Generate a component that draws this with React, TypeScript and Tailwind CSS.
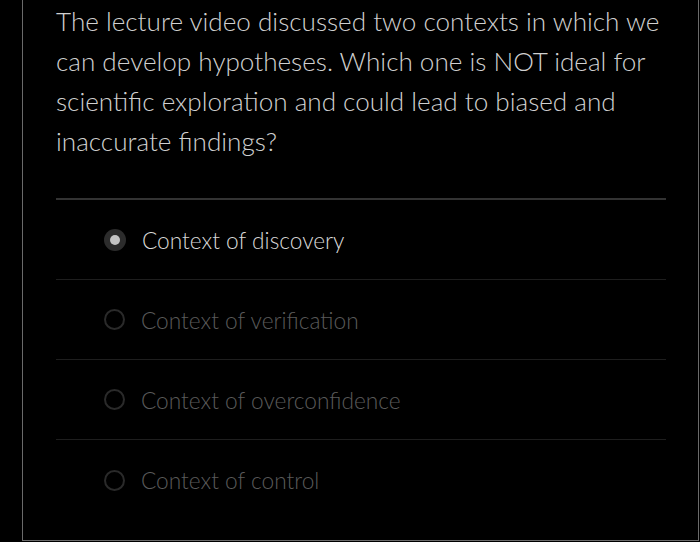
const options = [
  "Context of discovery",
  "Context of verification",
  "Context of overconfidence",
  "Context of control",
];

export default function App() {
  return (
    <div className="w-[700px] h-[542px] bg-black overflow-hidden" style={{ fontFamily: "Lato, 'Open Sans', sans-serif" }}>
      <div className="ml-[22px] mr-[1px] h-[541px] border-l border-r border-b border-[#6a6a6a] pl-[33px] pr-[32px]">
        <p className="pt-[1px] text-[26.1px] leading-[40px] font-light text-[#d0d0d0]">
          The lecture video discussed two contexts in which we can develop hypotheses. Which one is NOT ideal for
          scientific exploration and could lead to biased and inaccurate findings?
        </p>
        <div className="mt-[37px] border-t-2 border-[#333333]">
          {options.map((opt, i) => (
            <div
              key={opt}
              className={`h-[80px] flex items-center pl-[48px] ${i < options.length - 1 ? "border-b border-[#1e1e1e]" : ""}`}
            >
              {i === 0 ? (
                <span className="w-[22px] h-[22px] rounded-full bg-[#2c2c2c] flex items-center justify-center">
                  <span className="w-[10px] h-[10px] rounded-full bg-[#c4c4c4]" />
                </span>
              ) : (
                <span className="w-[21px] h-[21px] rounded-full border-2 border-[#2a2a2a]" />
              )}
              <span
                className={`ml-[16px] mt-[3px] text-[22.7px] font-light ${i === 0 ? "text-[#d8d8d8]" : "text-[#5a5a5a]"}`}
              >
                {opt}
              </span>
            </div>
          ))}
        </div>
      </div>
    </div>
  );
}
